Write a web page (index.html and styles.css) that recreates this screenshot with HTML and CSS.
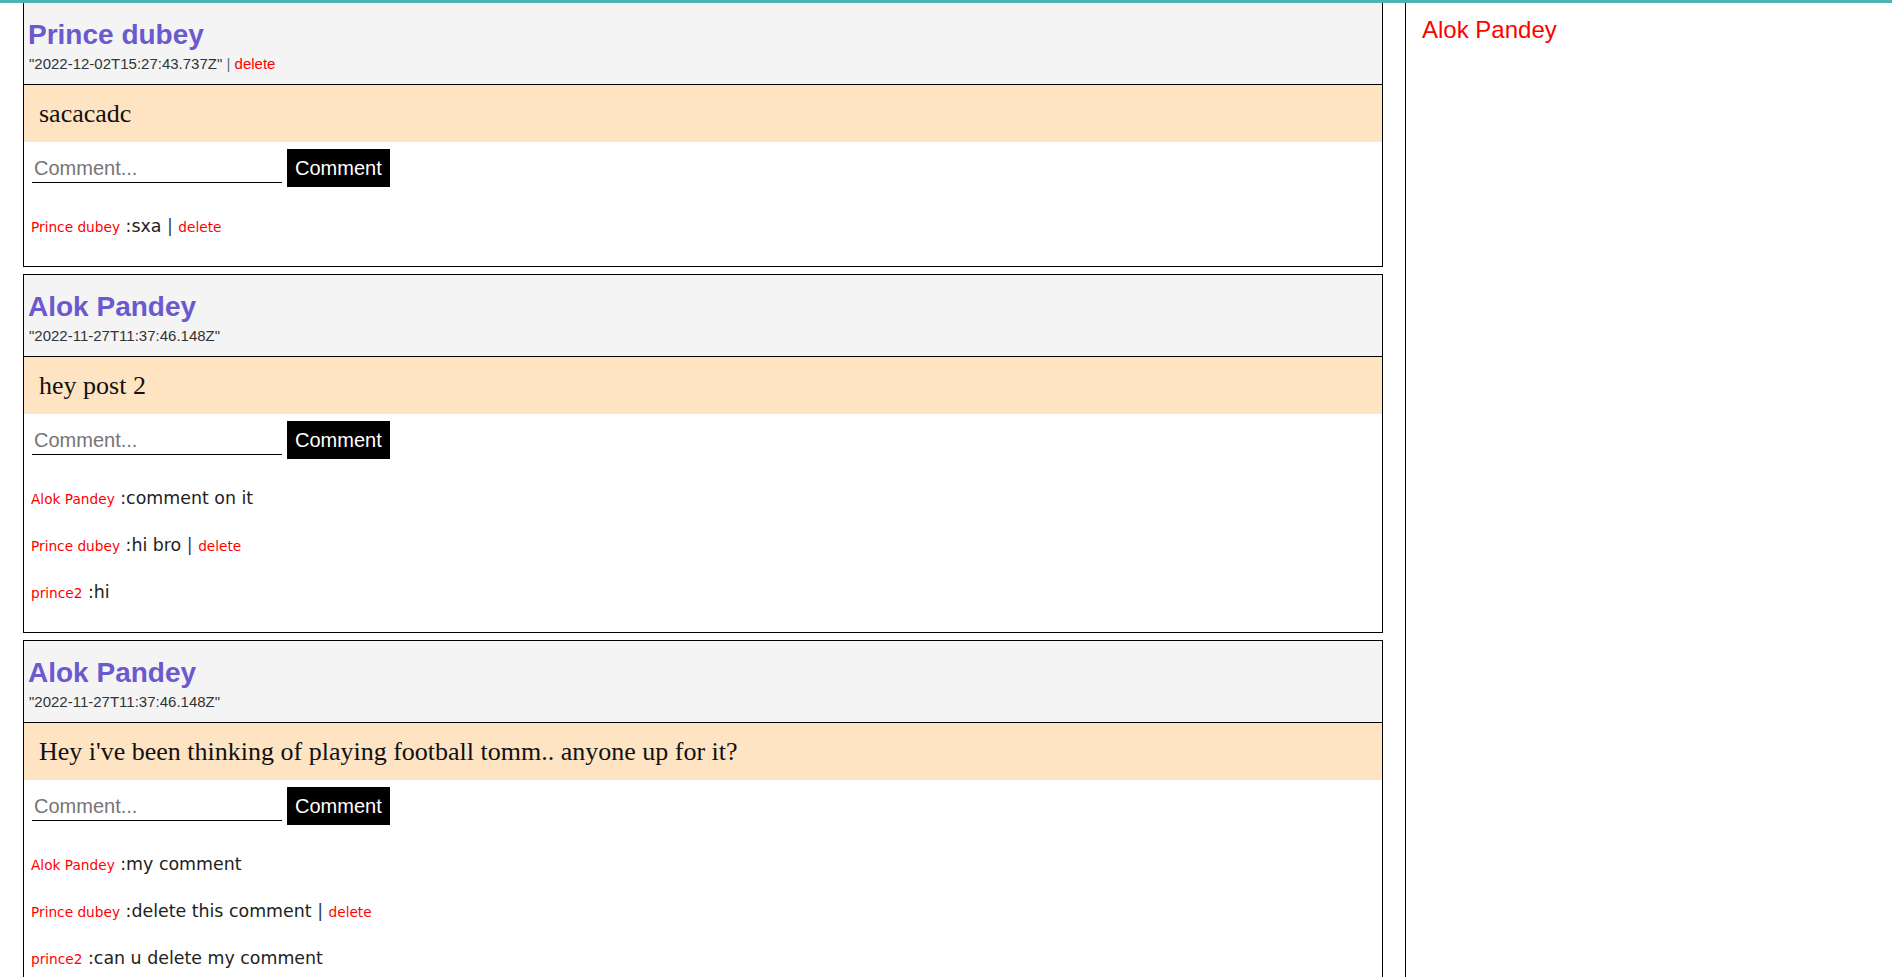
FILE: index.html
```html
<!DOCTYPE html>
<html lang="en">
<head>
<meta charset="utf-8">
<title>Posts</title>
<link rel="stylesheet" href="styles.css">
</head>
<body>
<div class="page">
  <main class="feed">
    <article class="card">
      <header class="card-head">
        <h2 class="author">Prince dubey</h2>
        <div class="meta">"2022-12-02T15:27:43.737Z" <span class="sep">|</span> <a class="del">delete</a></div>
      </header>
      <div class="card-body">sacacadc</div>
      <form class="comment-form">
        <input class="comment-input" type="text" placeholder="Comment...">
        <button class="comment-btn" type="button">Comment</button>
      </form>
      <div class="comments">
        <p class="comment"><span class="c-user">Prince dubey</span> :sxa <span class="c-sep">|</span> <a class="c-del">delete</a></p>
      </div>
    </article>

    <article class="card">
      <header class="card-head">
        <h2 class="author">Alok Pandey</h2>
        <div class="meta">"2022-11-27T11:37:46.148Z"</div>
      </header>
      <div class="card-body">hey post 2</div>
      <form class="comment-form">
        <input class="comment-input" type="text" placeholder="Comment...">
        <button class="comment-btn" type="button">Comment</button>
      </form>
      <div class="comments">
        <p class="comment"><span class="c-user">Alok Pandey</span> :comment on it</p>
        <p class="comment"><span class="c-user">Prince dubey</span> :hi bro <span class="c-sep">|</span> <a class="c-del">delete</a></p>
        <p class="comment"><span class="c-user">prince2</span> :hi</p>
      </div>
    </article>

    <article class="card">
      <header class="card-head">
        <h2 class="author">Alok Pandey</h2>
        <div class="meta">"2022-11-27T11:37:46.148Z"</div>
      </header>
      <div class="card-body">Hey i've been thinking of playing football tomm.. anyone up for it?</div>
      <form class="comment-form">
        <input class="comment-input" type="text" placeholder="Comment...">
        <button class="comment-btn" type="button">Comment</button>
      </form>
      <div class="comments">
        <p class="comment"><span class="c-user">Alok Pandey</span> :my comment</p>
        <p class="comment"><span class="c-user">Prince dubey</span> :delete this comment <span class="c-sep">|</span> <a class="c-del">delete</a></p>
        <p class="comment"><span class="c-user">prince2</span> :can u delete my comment</p>
      </div>
    </article>
  </main>
  <aside class="side">
    <div class="side-user">Alok Pandey</div>
  </aside>
</div>
</body>
</html>
```

FILE: styles.css
```css
html, body {
  margin: 0;
  padding: 0;
}

body {
  border-top: 3px solid #4cb5b4;
  background: #ffffff;
  font-family: "Liberation Sans", Arial, sans-serif;
  color: #222;
}

.page {
  display: grid;
  grid-template-columns: 1405px 1fr;
  min-height: 974px;
}

.feed {
  padding: 0 22px 0 23px;
  display: flex;
  flex-direction: column;
  gap: 7px;
}

.card {
  border: 1px solid #000;
  background: #fff;
}

.card:first-child {
  border-top: 0;
}

.card-head {
  background: #f4f4f4;
  border-bottom: 1px solid #000;
  padding: 16px 5px 12px 4px;
}

.author {
  margin: 0;
  font-size: 28px;
  line-height: 32px;
  font-weight: bold;
  color: #6a5acd;
}

.meta {
  margin-top: 4px;
  padding-left: 1px;
  font-size: 15px;
  line-height: 17px;
  color: #333;
}

.sep {
  color: #5b6b8c;
}

.del {
  color: #ff0000;
}

.card-body {
  background: #ffe4c4;
  padding: 0 15px;
  height: 57px;
  line-height: 57px;
  font-family: "Liberation Serif", "Times New Roman", serif;
  font-size: 26px;
  color: #111;
}

.comment-form {
  display: flex;
  align-items: flex-start;
  gap: 5px;
  margin: 7px 0 0 8px;
}

.comment-input {
  box-sizing: border-box;
  width: 250px;
  height: 34px;
  margin: 0;
  padding: 8px 2px 2px 2px;
  border: 0;
  border-bottom: 1px solid #000;
  outline: none;
  font-family: "Liberation Sans", Arial, sans-serif;
  font-size: 20px;
  line-height: 23px;
  background: transparent;
  color: #222;
}

.comment-input::placeholder {
  color: #757575;
}

.comment-btn {
  box-sizing: border-box;
  height: 38px;
  margin: 0;
  padding: 8px 8px 7px 8px;
  border: 0;
  border-radius: 0;
  background: #000;
  color: #fff;
  font-family: "Liberation Sans", Arial, sans-serif;
  font-size: 20px;
  line-height: 23px;
}

.comments {
  display: flex;
  flex-direction: column;
  gap: 20px;
  padding: 26px 7px 26px 7px;
}

.comment {
  margin: 0;
  font-family: "Comic Sans MS", "DejaVu Sans", sans-serif;
  font-size: 17.4px;
  line-height: 26px;
  color: #222;
}

.c-user {
  font-size: 13.7px;
  color: #ff0000;
}

.c-sep {
  color: #2c3a5a;
}

.c-del {
  font-size: 13.7px;
  color: #ff0000;
}

.side {
  border-left: 1px solid #000;
  padding: 13px 16px;
}

.side-user {
  font-size: 24px;
  color: #ff0000;
}
```
